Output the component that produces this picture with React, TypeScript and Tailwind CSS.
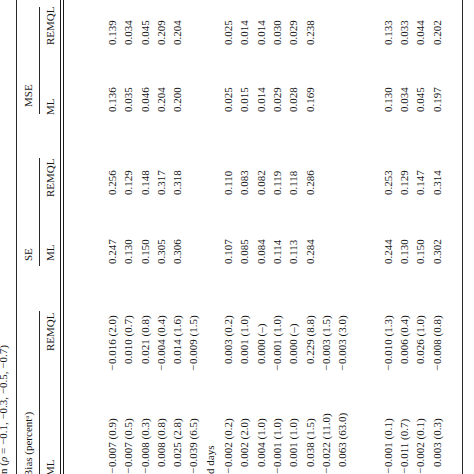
import React from "react";

const M = "\u2212";

const s1: string[][] = [
  [`${M}0.007 (0.9)`, `${M}0.016 (2.0)`, "0.247", "0.256", "0.136", "0.139"],
  [`${M}0.007 (0.5)`, "0.010 (0.7)", "0.130", "0.129", "0.035", "0.034"],
  [`${M}0.008 (0.3)`, "0.021 (0.8)", "0.150", "0.148", "0.046", "0.045"],
  ["0.008 (0.8)", `${M}0.004 (0.4)`, "0.305", "0.317", "0.204", "0.209"],
  ["0.025 (2.8)", "0.014 (1.6)", "0.306", "0.318", "0.200", "0.204"],
  [`${M}0.039 (6.5)`, `${M}0.009 (1.5)`, "", "", "", ""],
];

const s2: string[][] = [
  [`${M}0.002 (0.2)`, "0.003 (0.2)", "0.107", "0.110", "0.025", "0.025"],
  ["0.002 (2.0)", "0.001 (1.0)", "0.085", "0.083", "0.015", "0.014"],
  ["0.004 (1.0)", "0.000 (\u2013)", "0.084", "0.082", "0.014", "0.014"],
  [`${M}0.001 (1.0)`, `${M}0.001 (1.0)`, "0.114", "0.119", "0.029", "0.030"],
  ["0.001 (1.0)", "0.000 (\u2013)", "0.113", "0.118", "0.028", "0.029"],
  ["0.038 (1.5)", "0.229 (8.8)", "0.284", "0.286", "0.169", "0.238"],
  [`${M}0.022 (11.0)`, `${M}0.003 (1.5)`, "", "", "", ""],
  ["0.063 (63.0)", `${M}0.003 (3.0)`, "", "", "", ""],
];

const s3: string[][] = [
  [`${M}0.001 (0.1)`, `${M}0.010 (1.3)`, "0.244", "0.253", "0.130", "0.133"],
  [`${M}0.011 (0.7)`, "0.006 (0.4)", "0.130", "0.129", "0.034", "0.033"],
  [`${M}0.002 (0.1)`, "0.026 (1.0)", "0.150", "0.147", "0.045", "0.044"],
  ["0.003 (0.3)", `${M}0.008 (0.8)`, "0.302", "0.314", "0.197", "0.202"],
];

const pads = ["pl-[17px]", "pl-[10px]", "pl-[5px]", "pl-[4px]", "pl-[7px]", "pl-[4px]"];
const GRID = "grid grid-cols-[110px_105px_70px_80px_70px_49px]";

function Num({ v }: { v: string }) {
  if (v.startsWith(M)) {
    return (
      <span>
        <span className="inline-block w-[7px] -ml-[7px] text-left">{M}</span>
        {v.slice(1)}
      </span>
    );
  }
  return <span>{v}</span>;
}

function Row({ cells }: { cells: string[] }) {
  return (
    <div className={`${GRID} h-[16.3px] leading-[16.3px]`}>
      {cells.map((c, i) => (
        <div key={i} className={`${pads[i]} whitespace-nowrap`}>
          <Num v={c} />
        </div>
      ))}
    </div>
  );
}

export default function App() {
  return (
    <div className="w-[474px] h-[474px] overflow-hidden bg-white">
      <div
        className="w-[474px] h-[474px] overflow-hidden -rotate-90 bg-white text-[#141414] text-[11px]"
        style={{ fontFamily: '"Liberation Serif", "Times New Roman", serif' }}
      >
        <div className="-ml-[10px] w-[484px] flex flex-col">
          {/* title */}
          <div className="h-[16px] pl-[10px] whitespace-nowrap">
            <div className="-mt-[3px] leading-[12px]">
              n (<i>ρ</i> = {M}0.1, {M}0.3, {M}0.5, {M}0.7)
            </div>
          </div>
          <div className="h-px bg-[#2a2a2a]" />
          {/* header row 1 */}
          <div className={`${GRID} h-[22px] leading-[22px]`}>
            <div className="col-span-2 pl-[7px] whitespace-nowrap">
              Bias (percent<sup className="text-[7px]">a</sup>)
            </div>
            <div className="col-span-2 pl-[8px]">SE</div>
            <div className="col-span-2 pl-[12px]">MSE</div>
          </div>
          <div className={`${GRID} h-px`}>
            <div className="col-span-2">
              <div className="w-[173px] h-px bg-[#2a2a2a]" />
            </div>
            <div className="col-span-2">
              <div className="ml-[3px] w-[108px] h-px bg-[#2a2a2a]" />
            </div>
            <div className="col-span-2">
              <div className="ml-[5px] w-[107px] h-px bg-[#2a2a2a]" />
            </div>
          </div>
          {/* header row 2 */}
          <div className={`${GRID} h-[20px] leading-[20px]`}>
            <div className="pl-[8px]">ML</div>
            <div className="pl-[23px]">REMQL</div>
            <div className="pl-[8px]">ML</div>
            <div className="pl-[2px]">REMQL</div>
            <div className="pl-[4px]">ML</div>
            <div className="pl-[4px]">REMQL</div>
          </div>
          <div className="h-[4px] border-y border-[#1a1a1a]" />
          <div className="h-[40px]" />
          {s1.map((r, i) => (
            <Row key={`a${i}`} cells={r} />
          ))}
          <div className="h-[16.3px] leading-[16.3px] pl-[10px] whitespace-nowrap">d days</div>
          <div className="h-[2px]" />
          {s2.map((r, i) => (
            <Row key={`b${i}`} cells={r} />
          ))}
          <div className="h-[29.4px]" />
          {s3.map((r, i) => (
            <Row key={`c${i}`} cells={r} />
          ))}
          <div className="h-[17px]" />
          <div className="h-px bg-[#2a2a2a]" />
        </div>
      </div>
    </div>
  );
}
